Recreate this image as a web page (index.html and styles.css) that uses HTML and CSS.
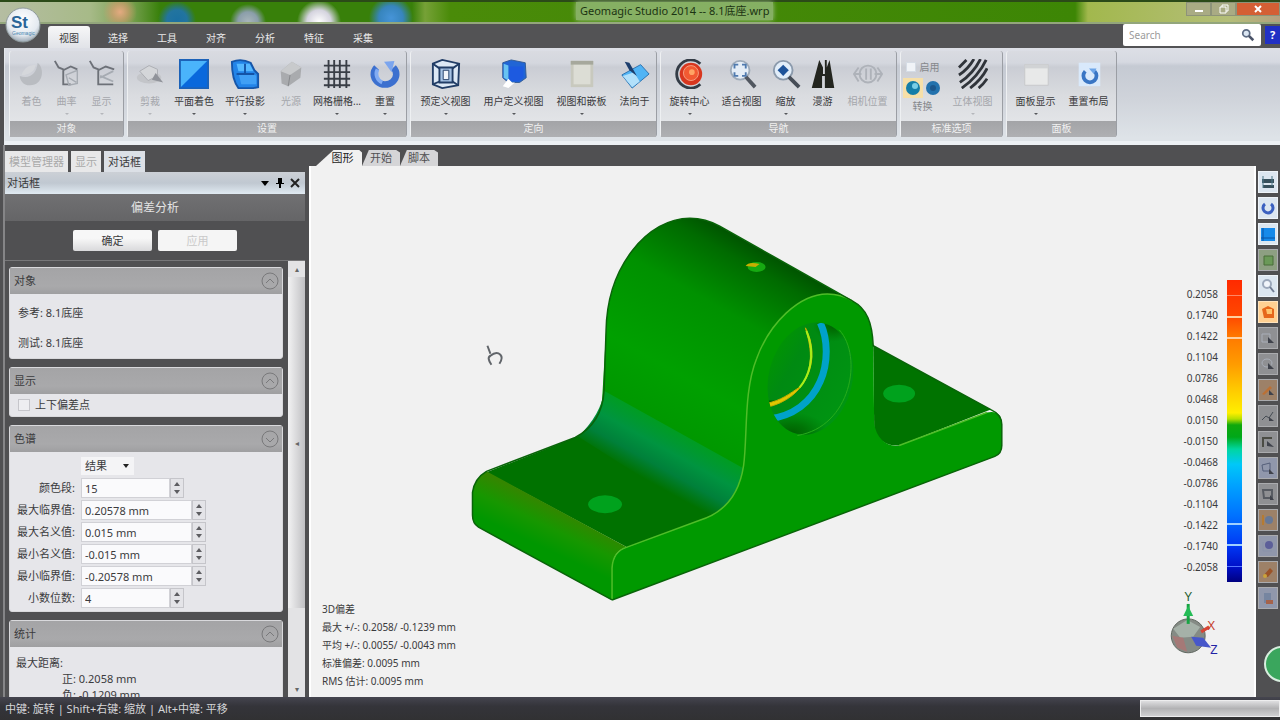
FILE: index.html
```html
<!DOCTYPE html>
<html lang="zh-CN">
<head>
  <meta charset="UTF-8">
  <meta name="viewport" content="width=device-width, initial-scale=1.0">
  <title>Geomagic Studio 2014</title>
  <link rel="stylesheet" href="styles.css">
</head>
<body>
  <header class="titlebar">
    <h1>Geomagic Studio 2014 -- 8.1底座.wrp</h1>
    <div class="window-buttons">
      <button aria-label="最小化"><svg viewBox="0 0 12 12"><rect x="2" y="7" width="8" height="2"/></svg></button>
      <button aria-label="最大化"><svg viewBox="0 0 12 12"><path d="M2 4h6v6H2zM4 4V2h6v6H8" fill="none" stroke="#fff"/></svg></button>
      <button class="close" aria-label="关闭"><svg viewBox="0 0 12 12"><path d="M3 3l6 6M9 3l-6 6" stroke="#fff" stroke-width="2"/></svg></button>
    </div>
  </header>

  <nav class="menubar">
    <button class="app-button" aria-label="Studio">
      <svg viewBox="0 0 36 36">
        <defs>
          <radialGradient id="orb" cx="0.5" cy="0.35" r="0.65">
            <stop offset="0" stop-color="#fff"/>
            <stop offset="0.7" stop-color="#e4eaf0"/>
            <stop offset="1" stop-color="#9ba8b4"/>
          </radialGradient>
        </defs>
        <circle cx="18" cy="18" r="17" fill="url(#orb)" stroke="#8f9a9c"/>
        <text x="6" y="21" class="orb-text">St</text>
        <text x="7" y="28" class="orb-sub">Geomagic</text>
      </svg>
    </button>
    <div class="menu-tabs">
      <button class="active">视图</button>
      <button>选择</button>
      <button>工具</button>
      <button>对齐</button>
      <button>分析</button>
      <button>特征</button>
      <button>采集</button>
    </div>
    <label class="search">
      <input type="text" placeholder="Search" aria-label="Search">
      <svg viewBox="0 0 16 16"><circle cx="6" cy="6" r="4" fill="#dbe6f2" stroke="#5c6b84" stroke-width="2"/><path d="M9 9l5 5" stroke="#4a5368" stroke-width="3"/></svg>
    </label>
    <button class="help">?</button>
  </nav>

  <div class="ribbon">
    <section class="group group-object">
      <div class="tools">
        <button class="tool" disabled>
          <svg viewBox="0 0 32 32"><path d="M22 4c8 6 6 24-8 24C6 28 3 22 3 18c10 4 18-2 19-14z" fill="#b9bcc1"/><path d="M5 17c8 0 14-4 15-11-8 0-13 4-15 11z" fill="#d5d7db"/></svg>
          <span>着色</span>
        </button>
        <button class="tool arrow" disabled>
          <svg viewBox="0 0 32 32" fill="none" stroke="#6d7178" stroke-width="2"><path d="M3 2l4 7 5 2v17M12 12l8-4 7 3M12 27h8"/><path d="M15 17l12-5v14l-9 2zM18 20l8 5" stroke="#a6abb2" stroke-width="1.500"/></svg>
          <span>曲率</span>
        </button>
        <button class="tool arrow" disabled>
          <svg viewBox="0 0 32 32" fill="none" stroke="#6d7178" stroke-width="2"><path d="M3 2l4 7 5 2v17M12 12l8-4 9 3M12 27h16"/><path d="M14 20l14-7M14 18l14 6" stroke="#a6abb2"/></svg>
          <span>显示</span>
        </button>
      </div>
      <h2>对象</h2>
    </section>

    <section class="group group-settings">
      <div class="tools">
        <button class="tool arrow" disabled>
          <svg viewBox="0 0 32 32"><ellipse cx="15" cy="20" rx="13" ry="6" fill="#c3c5c9"/><path d="M5 13l10-6 9 4v7l-10 5z" fill="#d4d6d9" stroke="#abadb2"/><path d="M18 22l12 3-8-10z" fill="#90939a"/></svg>
          <span>剪裁</span>
        </button>
        <button class="tool arrow">
          <svg viewBox="0 0 32 32"><path d="M1 1h30v30H1z" fill="#0968dc"/><path d="M1 1h30L1 31z" fill="#4ab4fb"/><path d="M1 1h30v30H1z" fill="none" stroke="#1c62b8" stroke-width="2"/></svg>
          <span>平面着色</span>
        </button>
        <button class="tool arrow">
          <svg viewBox="0 0 32 32"><path d="M2 3q10-4 20 1l4 8 4 4v14l-5 1H9Q2 22 2 3z" fill="#2384e8" stroke="#1756a8" stroke-width="2"/><path d="M7 5h14l4 8H9z" fill="#55b8ff"/><path d="M9 15h16l3 3v9H12z" fill="#41a0f5"/><path d="M16 5v11M7 16h19" stroke="#1453a6" stroke-width="2"/></svg>
          <span>平行投影</span>
        </button>
        <button class="tool" disabled>
          <svg viewBox="0 0 32 32"><path d="M5 13L17 3l10 6-1 11-13 9-7-3z" fill="#a9abae"/><path d="M5 13l10 4 12-8-10-6z" fill="#c8cacc"/><path d="M15 17l-2 12" stroke="#85878b"/></svg>
          <span>光源</span>
        </button>
        <button class="tool arrow">
          <svg viewBox="0 0 32 32" fill="none" stroke="#393e46" stroke-width="2"><path d="M2 7h28M2 14h28M2 21h28M2 28h28M7 1v30M13 1v30M19 1v30M26 1v30"/></svg>
          <span>网格栅格...</span>
        </button>
        <button class="tool arrow">
          <svg viewBox="0 0 32 32"><path d="M7 9A12 11 0 1 0 25 9" fill="none" stroke="#3c70cf" stroke-width="7"/><path d="M8 11A10 10 0 0 0 13 25" fill="none" stroke="#82acf3" stroke-width="4"/><path d="M15 3l11-1-3 12z" fill="#7ba5ee"/></svg>
          <span>重置</span>
        </button>
      </div>
      <h2>设置</h2>
    </section>

    <section class="group group-orient">
      <div class="tools">
        <button class="tool arrow">
          <svg viewBox="0 0 32 32" fill="#dce8f5" stroke="#213d66" stroke-width="2"><path d="M2 5l10-4 18 4-1 23-17 3L2 27z"/><path d="M2 5l7 5M30 5l-7 5M2 27l7-3M29 28l-6-4" fill="none"/><path d="M9 9h14v16H9z" fill="#a7c3e4"/><path d="M13 12h6v10h-6z" fill="#f2f5fa" stroke-width="1"/></svg>
          <span>预定义视图</span>
        </button>
        <button class="tool arrow">
          <svg viewBox="0 0 32 32"><path d="M4 4l9-3 15 3 1 16-7 5H10l-6-5z" fill="#2165d5" stroke="#315b94"/><path d="M5 5l5 2v16l-5-3z" fill="#68c3f2"/><path d="M11 8h15v12l-6 4-9-1z" fill="#1d5ae0"/><path d="M4 29l6-8 4 4h3l-7 6z" fill="#fff"/></svg>
          <span>用户定义视图</span>
        </button>
        <button class="tool arrow">
          <svg viewBox="0 0 32 32"><path d="M4 2h24v28H4z" fill="#c8c9be"/><path d="M7 5h18v22H7z" fill="#dcddd5"/><path d="M4 2h24v4H4z" fill="#a6a89c"/></svg>
          <span>视图和嵌板</span>
        </button>
        <button class="tool">
          <svg viewBox="0 0 32 32"><path d="M2 17L22 6l9 10-18 15z" fill="#50b4f5" stroke="#286fae"/><path d="M3 18l12-4 6 10-8 6z" fill="#b2e0fa"/><path d="M5 3l5 1 8 14-8-6z" fill="#1c3e6d"/></svg>
          <span>法向于</span>
        </button>
      </div>
      <h2>定向</h2>
    </section>

    <section class="group group-navigate">
      <div class="tools">
        <button class="tool arrow">
          <svg viewBox="0 0 32 32"><path d="M27 5A15 15 0 1 0 27 27" fill="none" stroke="#333c46" stroke-width="3"/><circle cx="17" cy="16" r="12" fill="#d8371f"/><circle cx="17" cy="15" r="8" fill="#f25a32" stroke="#f6a183"/><circle cx="18" cy="14" r="3" fill="#ffa465"/></svg>
          <span>旋转中心</span>
        </button>
        <button class="tool">
          <svg viewBox="0 0 32 32"><circle cx="14" cy="12" r="10" fill="#e4edf6" stroke="#9eabb9" stroke-width="2"/><path d="M20 19l10 11" stroke="#515760" stroke-width="4"/><path d="M8 10V6h4M16 6h4v4M20 14v4h-4M12 18H8v-4" fill="none" stroke="#4f7aae" stroke-width="2"/></svg>
          <span>适合视图</span>
        </button>
        <button class="tool arrow">
          <svg viewBox="0 0 32 32"><circle cx="13" cy="12" r="10" fill="#e1edf9" stroke="#8b9aac" stroke-width="2"/><path d="M19 19l11 11" stroke="#464d57" stroke-width="4"/><path d="M13 6l3 3 3 3-3 3-3 3-3-3-3-3 3-3z" fill="#1d539a"/></svg>
          <span>缩放</span>
        </button>
        <button class="tool">
          <svg viewBox="0 0 32 32"><path d="M12 1l4 8V1h4v8l3-8 5 30H18V18h-3v13H4z" fill="#23251f"/><path d="M16 1h2v15h-2z" fill="#d5d7dd"/></svg>
          <span>漫游</span>
        </button>
        <button class="tool" disabled>
          <svg viewBox="0 0 32 32" fill="none" stroke="#aeb2b9" stroke-width="2"><circle cx="16" cy="16" r="9"/><path d="M1 16h8M23 16h8M6 9l-5 7 5 8M26 9l5 7-5 8M14 10v12M19 10v12"/></svg>
          <span>相机位置</span>
        </button>
      </div>
      <h2>导航</h2>
    </section>

    <section class="group group-stereo">
      <div class="tools">
        <div class="stack">
          <label><input type="checkbox" disabled>启用</label>
          <div class="eyes">
            <svg viewBox="0 0 20 20"><rect width="20" height="20" fill="#f6dfa8"/><circle cx="10" cy="10" r="7" fill="#157ea8"/><circle cx="12" cy="8" r="3" fill="#79cee6"/></svg>
            <svg viewBox="0 0 20 20"><circle cx="10" cy="10" r="7" fill="#2372ad"/><circle cx="10" cy="10" r="3" fill="#1c578c"/></svg>
          </div>
          <span>转换</span>
        </div>
        <button class="tool arrow" disabled>
          <svg viewBox="0 0 32 32" fill="none" stroke="#30343a" stroke-width="3"><path d="M1 9l8-8M1 17C9 12 13 7 17 0M2 25C11 19 19 10 24 0M4 31C15 24 25 12 30 1M13 31C22 24 27 18 31 10M22 31q5-4 9-10"/></svg>
          <span>立体视图</span>
        </button>
      </div>
      <h2>标准选项</h2>
    </section>

    <section class="group group-panel">
      <div class="tools">
        <button class="tool arrow">
          <svg viewBox="0 0 32 32"><path d="M4 6h25v22H4z" fill="#e8e9e9" stroke="#c6c8ca"/><path d="M4 6h25v4H4z" fill="#d1d3d5"/></svg>
          <span>面板显示</span>
        </button>
        <button class="tool">
          <svg viewBox="0 0 32 32"><rect x="5" y="4" width="23" height="25" fill="#d9e9fb"/><path d="M12 13a7 7 0 1 0 10 0" fill="none" stroke="#3975c4" stroke-width="4"/><path d="M16 10h8l-3 6z" fill="#6da5e8"/></svg>
          <span>重置布局</span>
        </button>
      </div>
      <h2>面板</h2>
    </section>
  </div>

  <main class="workspace">
    <aside class="sidebar">
      <div class="side-tabs">
        <button>模型管理器</button>
        <button>显示</button>
        <button class="active">对话框</button>
      </div>
      <div class="dock-title">
        <span>对话框</span>
        <button aria-label="菜单"><svg viewBox="0 0 10 10"><path d="M1 3h8L5 8z"/></svg></button>
        <button aria-label="固定"><svg viewBox="0 0 10 10"><path d="M3 0h4v5h2v1H6v4H4V6H1V5h2z"/></svg></button>
        <button aria-label="关闭"><svg viewBox="0 0 10 10"><path d="M1 1l8 8M9 1L1 9" stroke="#222" stroke-width="2"/></svg></button>
      </div>
      <h2 class="dialog-title">偏差分析</h2>
      <div class="dialog-actions">
        <button>确定</button>
        <button disabled>应用</button>
      </div>

      <div class="dialog-scroll">
        <div class="sections">
          <section class="panel">
            <h3>对象<button aria-label="折叠"><svg viewBox="0 0 18 18"><circle cx="9" cy="9" r="8"/><path d="M5 11l4-4 4 4"/></svg></button></h3>
            <div class="panel-body refs">
              <p>参考: 8.1底座</p>
              <p>测试: 8.1底座</p>
            </div>
          </section>

          <section class="panel">
            <h3>显示<button aria-label="折叠"><svg viewBox="0 0 18 18"><circle cx="9" cy="9" r="8"/><path d="M5 11l4-4 4 4"/></svg></button></h3>
            <div class="panel-body">
              <label class="check"><input type="checkbox">上下偏差点</label>
            </div>
          </section>

          <section class="panel">
            <h3>色谱<button aria-label="展开"><svg viewBox="0 0 18 18"><circle cx="9" cy="9" r="8"/><path d="M5 8l4 4 4-4"/></svg></button></h3>
            <div class="panel-body fields">
              <div class="field">
                <span></span>
                <div class="select"><select aria-label="色谱"><option>结果</option></select></div>
              </div>
              <div class="field short">
                <label for="segments">颜色段:</label>
                <input id="segments" type="text" value="15"><span class="spin"></span>
              </div>
              <div class="field">
                <label for="max-critical">最大临界值:</label>
                <input id="max-critical" type="text" value="0.20578 mm"><span class="spin"></span>
              </div>
              <div class="field">
                <label for="max-nominal">最大名义值:</label>
                <input id="max-nominal" type="text" value="0.015 mm"><span class="spin"></span>
              </div>
              <div class="field">
                <label for="min-nominal">最小名义值:</label>
                <input id="min-nominal" type="text" value="-0.015 mm"><span class="spin"></span>
              </div>
              <div class="field">
                <label for="min-critical">最小临界值:</label>
                <input id="min-critical" type="text" value="-0.20578 mm"><span class="spin"></span>
              </div>
              <div class="field short">
                <label for="decimals">小数位数:</label>
                <input id="decimals" type="text" value="4"><span class="spin"></span>
              </div>
            </div>
          </section>

          <section class="panel">
            <h3>统计<button aria-label="折叠"><svg viewBox="0 0 18 18"><circle cx="9" cy="9" r="8"/><path d="M5 11l4-4 4 4"/></svg></button></h3>
            <div class="panel-body stats">
              <p>最大距离:</p>
              <p class="indent">正: 0.2058 mm</p>
              <p class="indent">负: -0.1209 mm</p>
            </div>
          </section>
        </div>
        <div class="scrollbar">
          <span>▴</span>
          <div class="thumb"><span>◂</span></div>
          <span>▾</span>
        </div>
      </div>
    </aside>

    <div class="view">
      <div class="view-tabs">
        <button class="active">图形</button>
        <button>开始</button>
        <button>脚本</button>
      </div>
      <div class="viewport">
        <svg class="model" viewBox="310 166 946 530">
          <defs>
            <linearGradient id="barrel" gradientUnits="userSpaceOnUse" x1="770" y1="245" x2="660" y2="440">
              <stop offset="0" stop-color="#004c00"/>
              <stop offset="0.120" stop-color="#006b00"/>
              <stop offset="0.350" stop-color="#009100"/>
              <stop offset="0.700" stop-color="#00a000"/>
              <stop offset="1" stop-color="#009500"/>
            </linearGradient>
            <linearGradient id="fillet" gradientUnits="userSpaceOnUse" x1="690" y1="412" x2="651" y2="482">
              <stop offset="0" stop-color="#009a00"/>
              <stop offset="0.300" stop-color="#009c24"/>
              <stop offset="0.550" stop-color="#009440"/>
              <stop offset="0.780" stop-color="#00803a"/>
              <stop offset="1" stop-color="#007200"/>
            </linearGradient>
            <linearGradient id="side" gradientUnits="userSpaceOnUse" x1="562" y1="510" x2="544" y2="548">
              <stop offset="0" stop-color="#348600"/>
              <stop offset="0.500" stop-color="#179700"/>
              <stop offset="1" stop-color="#009700"/>
            </linearGradient>
            <linearGradient id="bore" gradientUnits="userSpaceOnUse" x1="768" y1="350" x2="852" y2="400">
              <stop offset="0" stop-color="#009600"/>
              <stop offset="0.300" stop-color="#008a12"/>
              <stop offset="1" stop-color="#009512"/>
            </linearGradient>
            <radialGradient id="bore-shade">
              <stop offset="0" stop-color="#006200"/>
              <stop offset="0.400" stop-color="#006800" stop-opacity="0.700"/>
              <stop offset="1" stop-color="#007000" stop-opacity="0"/>
            </radialGradient>
            <clipPath id="bore-clip"><ellipse cx="811" cy="378" rx="42" ry="57" transform="rotate(14 811 378)"/></clipPath>
          </defs>
          <!-- base plate, top face -->
          <path d="M486 472L575 437Q590 432 600 414L760 500 710 518 627 547Z" fill="#007200"/>
          <path d="M874 345L992 409 900 445Q880 446 875 428Z" fill="#007300"/>
          <!-- barrel and the fillet under it -->
          <path d="M602 400L606 330C607 265 648 217 690 217Q706 217 720 225L853 300 800 320 755 370 746 490Z" fill="url(#barrel)"/>
          <path d="M604 390Q601 414 578 436L705 517Q738 507 746 469Z" fill="url(#fillet)"/>
          <!-- end of the plate -->
          <path d="M486 471L627 547Q613 550 612 568V600L478 527Q472 523 472 515V492Q474 478 486 471Z" fill="url(#side)"/>
          <!-- front face -->
          <path d="M612 600V568Q613 551 627 547L700 520C726 512 740 492 744 465C748 435 744 390 757 358C770 322 800 293 828 293Q842 293 853 300C868 308 873 322 874 345L875 423C877 438 888 447 900 445L988 412Q1003 409 1003 424V445Q1003 453 996 456Z" fill="#009900"/>
          <path d="M612 600V568Q613 551 627 547L700 520C726 512 740 492 744 465C748 435 744 390 757 358C770 322 800 293 828 293Q842 293 853 300M900 445L988 412" fill="none" stroke="#4fbd28" stroke-width="1.500"/>
          <path d="M612 600L478 527Q472 523 472 515V492Q474 478 486 471L575 437Q602 423 604 390L606 330C607 265 648 217 690 217Q706 217 720 225L853 300C868 308 873 322 874 345L992 409Q1003 414 1003 424V445Q1003 453 996 456L612 600" fill="none" stroke="#096409" stroke-width="1.500"/>
          <!-- bore with the coloured rings -->
          <g clip-path="url(#bore-clip)">
            <path d="M750 310h120v140H750z" fill="url(#bore)"/>
            <ellipse cx="793" cy="432" rx="36" ry="20" fill="url(#bore-shade)"/>
            <ellipse cx="834" cy="325" rx="20" ry="16" fill="url(#bore-shade)"/>
            <path d="M768 400h13l-8 5h-5z" fill="#006200"/>
            <path d="M821 322C836 355 824 414 765 419" fill="none" stroke="#00a2c9" stroke-width="7"/>
            <path d="M806 327C822 357 809 398 766 407L766 403C782 400 790 393 801 386 816 365 811 345 806 327Z" fill="#dfc800" stroke="#c9ad00"/>
            <path d="M807 330C818 356 808 378 800 387" fill="none" stroke="#a7ef19" stroke-width="2"/>
          </g>
          <path d="M840 329C864 356 852 426 798 435" fill="none" stroke="#27ac1b"/>
          <!-- bolt holes and oil hole -->
          <ellipse cx="605" cy="504" rx="17" ry="9" fill="#00a21d"/>
          <ellipse cx="900" cy="393" rx="16" ry="9" fill="#00a21d"/>
          <ellipse cx="757" cy="266" rx="9" ry="5" fill="#16aa12"/>
          <path d="M746 265Q749 260 760 263L756 266Z" fill="#c6ae00"/>
          <!-- hand pointer -->
          <path d="M487 345l3 8M491 364q-5-7-1-9 6-5 10-1 3 3-1 9" fill="none" stroke="#61656a" stroke-width="2"/>
          <!-- axis triad -->
          <g class="triad">
            <circle cx="1190" cy="636" r="17" fill="#858b85" stroke="#606760"/>
            <path d="M1175 629l14-9 13 7-7 10-13 1z" fill="#a5b1a8"/>
            <path d="M1174 636l11 2 4 14-10-4z" fill="#a57977"/>
            <path d="M1190 604v20" stroke="#17a443" stroke-width="3"/>
            <path d="M1190 606l-5 10h10z" fill="#24bc56"/>
            <path d="M1203 632l8-5" stroke="#d84534" stroke-width="3"/>
            <path d="M1193 637l12 1 8 10-15-2z" fill="#4757ca"/>
            <text x="1186" y="601" fill="#245d30">Y</text>
            <text x="1209" y="630" fill="#c63c2b">X</text>
            <text x="1212" y="654" fill="#2222a5">Z</text>
          </g>
        </svg>

        <div class="deviation">
          <p>3D偏差</p>
          <p>最大 +/-: 0.2058/ -0.1239 mm</p>
          <p>平均 +/-: 0.0055/ -0.0043 mm</p>
          <p>标准偏差: 0.0095 mm</p>
          <p>RMS 估计: 0.0095 mm</p>
        </div>

        <div class="legend">
          <ul>
            <li>0.2058</li>
            <li>0.1740</li>
            <li>0.1422</li>
            <li>0.1104</li>
            <li>0.0786</li>
            <li>0.0468</li>
            <li>0.0150</li>
            <li>-0.0150</li>
            <li>-0.0468</li>
            <li>-0.0786</li>
            <li>-0.1104</li>
            <li>-0.1422</li>
            <li>-0.1740</li>
            <li>-0.2058</li>
          </ul>
          <div class="scale"></div>
        </div>
      </div>
    </div>

    <div class="toolstrip">
      <button class="light" aria-label="打印"><svg viewBox="0 0 16 16"><path d="M2 5h12v4H2zM3 11h11v3H3z" fill="#37505c"/><path d="M3 2v12M12 2v10" stroke="#4f798a"/></svg></button>
      <button class="light" aria-label="重置"><svg viewBox="0 0 16 16"><path d="M5 4a5 5 0 1 0 6 0" fill="none" stroke="#3b60c0" stroke-width="3"/></svg></button>
      <button class="light" aria-label="矩形"><svg viewBox="0 0 16 16"><path d="M1 2h14v13H1z" fill="#168aea"/><path d="M3 2v13M1 12h14" stroke="#0852a4"/></svg></button>
      <button class="green" aria-label="模型"><svg viewBox="0 0 16 16"><path d="M4 4h9v9H4z" fill="#6a9958" stroke="#486c39"/></svg></button>
      <button class="light" aria-label="缩放"><svg viewBox="0 0 16 16"><circle cx="7" cy="6" r="4" fill="#f1f5fb" stroke="#9da9bc" stroke-width="2"/><path d="M10 9l4 5" stroke="#707c92" stroke-width="2"/></svg></button>
      <button class="orange" aria-label="选择"><svg viewBox="0 0 16 16"><path d="M2 5l6-3 6 3v9H4z" fill="#e6671b"/><path d="M6 5h6v5H7z" fill="#ffc36b"/></svg></button>
      <button aria-label="矩形选择"><svg viewBox="0 0 16 16"><path d="M2 4h8v8H2z" fill="none" stroke="#a9aeb8"/><path d="M8 7l6 6H8z"/></svg></button>
      <button aria-label="椭圆选择"><svg viewBox="0 0 16 16"><ellipse cx="7" cy="7" rx="5" ry="4" fill="none" stroke="#a9aeb8"/><path d="M8 7l6 6H8z"/></svg></button>
      <button class="brown" aria-label="画笔"><svg viewBox="0 0 16 16"><path d="M2 12l8-8 2 2-8 7z" fill="#bb7034"/><path d="M9 8l5 5H9z"/></svg></button>
      <button aria-label="线条"><svg viewBox="0 0 16 16"><path d="M2 12l4-4 3 2 4-6" fill="none" stroke="#444b53"/><path d="M9 9l5 4H9z"/></svg></button>
      <button aria-label="套索"><svg viewBox="0 0 16 16"><path d="M3 13V4h9" fill="none" stroke="#4b4c44" stroke-width="2"/><path d="M7 7l7 6-7-1z"/></svg></button>
      <button class="blue" aria-label="多边形"><svg viewBox="0 0 16 16"><path d="M2 5l8-2v8H3z" fill="none" stroke="#555f7a"/><path d="M9 9l5 5H9z"/></svg></button>
      <button aria-label="定制区域"><svg viewBox="0 0 16 16"><path d="M3 4h9v8H4z" fill="none" stroke="#575b62" stroke-width="2"/><path d="M10 9l4 5h-4z"/></svg></button>
      <button class="brown" aria-label="贯通"><svg viewBox="0 0 16 16"><circle cx="9" cy="8" r="4" fill="#687895"/><path d="M3 3v10" stroke="#b67b31" stroke-width="2"/></svg></button>
      <button class="blue" aria-label="可见"><svg viewBox="0 0 16 16"><circle cx="9" cy="7" r="4" fill="#5c5f99"/><path d="M3 4v9h9" fill="none" stroke="#8992a9"/></svg></button>
      <button class="brown" aria-label="反转"><svg viewBox="0 0 16 16"><path d="M3 12l7-8 3 3-5 6z" fill="#9b5327"/><circle cx="5" cy="12" r="2" fill="#caa33b"/></svg></button>
      <button class="blue" aria-label="清除"><svg viewBox="0 0 16 16"><path d="M4 3h7v10H4z" fill="#7685a0"/><path d="M6 10h7v4H6z" fill="#a5634b"/></svg></button>
    </div>
  </main>

  <footer class="statusbar">
    <span>中键: 旋转 | Shift+右键: 缩放 | Alt+中键: 平移</span>
    <div class="progress"></div>
  </footer>

  <button class="bubble" aria-label="助手"></button>
</body>
</html>
```

FILE: styles.css
```css
* {
  box-sizing: border-box;
}

body {
  margin: 0;
  height: 100vh;
  display: flex;
  flex-direction: column;
  overflow: hidden;
  position: relative;
  background: #505052;
  color: #3b3b3d;
  font-family: "Noto Sans", "Noto Sans CJK SC", sans-serif;
  font-size: 11px;
  line-height: 16px;
}

h1, h2, h3, p, ul {
  margin: 0;
  padding: 0;
  font-size: inherit;
  font-weight: normal;
}

button, input, select {
  margin: 0;
  padding: 0;
  border: none;
  background: none;
  color: inherit;
  font: inherit;
}

svg {
  display: block;
}

/* title bar, the desktop shows through */
.titlebar {
  height: 24px;
  flex: none;
  display: flex;
  align-items: flex-start;
  border-top: 2px solid #2b4a18;
  border-bottom: 2px solid #93a67c;
  background:
    radial-gradient(circle at 120px 10px, #e4aa80 0, #d79d70aa 8px, transparent 17px),
    radial-gradient(circle at 177px 18px, #1b70a2 0, #22749f 10px, transparent 19px),
    radial-gradient(circle at 248px 20px, #a9b6bb 0, #8b9eaa 10px, transparent 18px),
    radial-gradient(circle at 319px 20px, #fff 0, #d5d4df 12px, transparent 22px),
    radial-gradient(circle at 391px 16px, #4694d8 0, #3785bd 12px, transparent 22px),
    radial-gradient(ellipse at 813px 22px, #e2eada 0, #d2dfc8 8px, transparent 14px),
    linear-gradient(90deg, #b5bda2 0, #a7ba88 90px, #6f9c47 135px, #38800a 160px, #38800a 412px, #76a137 425px, #4a8b09 450px, #3d8605 84%, #a2b84d 85%, #b4be78 96%, #b4a080 100%);
}

.titlebar h1 {
  margin: 0 auto 0 45%;
  padding: 0 4px;
  white-space: nowrap;
  color: #1b3312;
  background: #a7c391aa;
  box-shadow: 0 0 5px #a7c391;
  line-height: 18px;
}

.window-buttons {
  display: flex;
}

.window-buttons button {
  width: 25px;
  height: 14px;
  display: grid;
  place-items: center;
  background: #a9ab84;
  border: 1px solid #8d9379;
}

.window-buttons svg {
  width: 12px;
  fill: #fff;
}

.window-buttons .close {
  width: 44px;
  background: #d45f34;
}

/* menu tabs */
.menubar {
  height: 24px;
  flex: none;
  display: flex;
  align-items: stretch;
  background: #535355;
}

.app-button {
  width: 48px;
  padding-left: 5px;
}

.app-button svg {
  width: 36px;
  height: 36px;
  margin-top: -22px;
}

.orb-text {
  font: bold 17px "Liberation Sans", sans-serif;
  fill: #2a6598;
}

.orb-sub {
  font: 5px "Liberation Sans", sans-serif;
  fill: #4482ae;
}

.menu-tabs {
  flex: 1;
  display: flex;
  gap: 7px;
}

.menu-tabs button {
  width: 42px;
  font-size: 10px;
  padding-top: 3px;
  color: #e9e9e9;
}

.menu-tabs .active {
  margin-top: 2px;
  padding-top: 1px;
  color: #3a3a3c;
  background: linear-gradient(#f7f7f8, #e1e3e8);
  border-radius: 3px 3px 0 0;
}

.search {
  width: 138px;
  height: 22px;
  padding: 0 6px;
  display: flex;
  align-items: center;
  background: #fff;
  border-radius: 2px;
}

.search input {
  flex: 1;
  min-width: 0;
  font-size: 10px;
}

.search input::placeholder {
  color: #9b9b9b;
}

.search svg {
  width: 14px;
}

.help {
  width: 15px;
  height: 18px;
  margin: 2px 0 0 4px;
  background: #2130c4;
  color: #fff;
  font-weight: bold;
}

/* ribbon */
.ribbon {
  height: 97px;
  flex: none;
  display: flex;
  gap: 3px;
  padding: 3px 0 4px 4px;
  margin-left: 4px;
  border-bottom: 4px solid #ecf0f4;
  border-left: 1px solid #e5e8ec;
  background: linear-gradient(#dddfe6 0, #d6d9e1 14px, #c5cad3 18px, #cfd3da 50px, #dee3e8 90px);
}

.group {
  display: flex;
  flex-direction: column;
  border-right: 1px solid #9b9ea4;
  border-left: 1px solid #eef0f2;
  border-radius: 3px;
  background: linear-gradient(#d9dbe1 0, #d4d7de 12px, #cacdd4 16px, #dadce0 45px, #e3e5e8 73px);
}

.group h2 {
  height: 16px;
  flex: none;
  color: #f1f1f1;
  background: linear-gradient(#a3a4a7, #afb0b3);
  font-size: 10px;
  text-align: center;
  line-height: 15px;
}

.tools {
  flex: 1;
  display: grid;
  justify-content: center;
}

.group-object { width: 115px; }
.group-settings { width: 280px; }
.group-orient { width: 247px; }
.group-navigate { width: 237px; }
.group-stereo { width: 103px; }
.group-panel { width: 111px; }

.group-object .tools { grid-template-columns: repeat(3, 35px); }
.group-settings .tools { grid-template-columns: 42px 46px 56px 36px 56px 40px; }
.group-orient .tools { grid-template-columns: 66px 70px 66px 40px; }
.group-navigate .tools { grid-template-columns: 54px 50px 38px 36px 54px; }
.group-stereo .tools { grid-template-columns: 42px 58px; }
.group-panel .tools { grid-template-columns: 54px 52px; }

.tool {
  display: flex;
  flex-direction: column;
  align-items: center;
  justify-content: flex-start;
  padding-top: 8px;
  font-size: 10px;
  line-height: 14px;
  white-space: nowrap;
}

.tool svg {
  width: 30px;
  height: 30px;
  margin-bottom: 5px;
}

.tool:disabled {
  color: #a5a7ac;
}

.tool.arrow::after {
  content: "";
  margin-top: 5px;
  border: 2px solid transparent;
  border-top-color: #55575b;
  border-bottom: 0;
}

.tool.arrow:disabled::after {
  border-top-color: #b5b7bc;
}

.stack {
  display: flex;
  flex-direction: column;
  align-items: center;
  padding-top: 8px;
  color: #85878b;
  font-size: 10px;
  white-space: nowrap;
}

.stack label {
  display: flex;
  align-items: center;
  gap: 4px;
  margin-bottom: 3px;
}

.stack input {
  appearance: none;
  width: 10px;
  height: 10px;
  background: #f0f3f7;
  border: 1px solid #d5dce5;
}

.eyes {
  display: flex;
}

.eyes svg {
  width: 20px;
}

/* main area */
.workspace {
  flex: 1;
  min-height: 0;
  display: flex;
}

.sidebar {
  width: 306px;
  flex: none;
  margin-left: 3px;
  padding: 6px 4px 0 0;
  display: flex;
  flex-direction: column;
  border-left: 2px solid #858587;
}

.side-tabs {
  display: flex;
  gap: 3px;
  height: 21px;
}

.side-tabs button {
  padding: 0 4px;
  background: #e8e8e9;
  color: #aaa;
  white-space: nowrap;
}

.side-tabs .active {
  background: #dce0e6;
  color: #3b3b3d;
}

.dock-title {
  height: 22px;
  display: flex;
  align-items: center;
  gap: 5px;
  padding: 0 5px 0 2px;
  background: linear-gradient(#ccd0d6, #c0c8d1 50%, #e0eaf2);
}

.dock-title span {
  flex: 1;
}

.dock-title svg {
  width: 10px;
  height: 10px;
}

.dialog-title {
  height: 27px;
  color: #e4e4e4;
  background: linear-gradient(#707072, #656567);
  font-size: 12px;
  line-height: 27px;
  text-align: center;
}

.dialog-actions {
  display: flex;
  justify-content: center;
  gap: 6px;
  padding: 9px 0;
}

.dialog-actions button {
  width: 79px;
  height: 21px;
  border-radius: 2px;
  background: linear-gradient(#f7f7f7 40%, #d9d9db);
}

.dialog-actions button:disabled {
  background: #f5f5f5;
  color: #c9c9c9;
}

.dialog-scroll {
  flex: 1;
  min-height: 0;
  display: flex;
  gap: 5px;
  border-top: 1px solid #777779;
}

.sections {
  flex: 1;
  display: flex;
  flex-direction: column;
  gap: 8px;
  padding: 6px 0 0 4px;
  overflow: hidden;
}

.panel {
  flex: none;
  border: 1px solid #d9d9dc;
  border-radius: 3px;
  background: #e6e6ea;
}

.panel h3 {
  height: 26px;
  display: flex;
  align-items: center;
  justify-content: space-between;
  padding: 0 3px 0 4px;
  background: linear-gradient(#a4a4a6, #a9a9ab 70%, #9f9fa1);
}

.panel h3 svg {
  width: 18px;
  fill: none;
  stroke: #79797b;
}

.panel-body {
  padding: 3px 8px;
}

.refs {
  padding: 11px 8px 7px;
}

.refs p {
  line-height: 16px;
  margin-bottom: 14px;
}

.refs p:last-child {
  margin-bottom: 0;
}

.check {
  display: flex;
  align-items: center;
  gap: 5px;
}

.check input {
  appearance: none;
  width: 12px;
  height: 12px;
  border: 1px solid #c6c6cb;
  background: #eeeef1;
}

.fields {
  padding: 3px 6px 2px;
}

.field {
  display: flex;
  height: 22px;
  align-items: center;
}

.field > :first-child {
  width: 59px;
  margin-right: 6px;
  text-align: right;
  white-space: nowrap;
}

.field input {
  width: 111px;
  height: 20px;
  padding-left: 3px;
  background: #fafafc;
  border: 1px solid #d1d1d6;
}

.field.short input {
  width: 89px;
}

.select {
  position: relative;
  background: #f4f4f6;
}

.select select {
  appearance: none;
  width: 53px;
  height: 18px;
  padding-left: 4px;
}

.select::after {
  content: "";
  position: absolute;
  right: 5px;
  top: 7px;
  border: 3px solid transparent;
  border-top: 4px solid #222;
  border-bottom: 0;
  pointer-events: none;
}

.spin {
  width: 14px;
  height: 20px;
  display: flex;
  flex-direction: column;
  align-items: center;
  justify-content: center;
  gap: 4px;
  border: 1px solid #c5c5ca;
  background: #e4e4e8;
}

.spin::before,
.spin::after {
  content: "";
  border: 3px solid transparent;
}

.spin::before {
  border-top: 0;
  border-bottom: 4px solid #5d5d61;
}

.spin::after {
  border-bottom: 0;
  border-top: 4px solid #5d5d61;
}

.stats {
  padding: 8px 6px;
}

.stats .indent {
  padding-left: 46px;
}

.scrollbar {
  width: 17px;
  display: flex;
  flex-direction: column;
  align-items: center;
  background: #e3e3e5;
  color: #666;
  font-size: 8px;
}

.thumb {
  flex: none;
  width: 100%;
  height: 76%;
  display: grid;
  place-items: center;
  background: linear-gradient(90deg, #f2f2f3, #c0c0c3);
}

.scrollbar > :last-child {
  margin-top: auto;
}

.view {
  flex: 1;
  min-width: 0;
  display: flex;
  flex-direction: column;
}

.view-tabs {
  height: 21px;
  display: flex;
  align-items: flex-end;
  padding-left: 7px;
}

.view-tabs button {
  width: 38px;
  height: 16px;
  line-height: 14px;
  color: #505052;
  background: #d5d5d7;
  clip-path: polygon(18% 0, 90% 0, 100% 15%, 100% 100%, 0 100%);
}

.view-tabs .active {
  width: 46px;
  padding-left: 7px;
  color: #222;
  background: #f1f1f1;
  clip-path: polygon(38% 0, 94% 0, 100% 15%, 100% 100%, 0 100%);
}

.viewport {
  flex: 1;
  min-height: 0;
  position: relative;
  background: #f1f1f1;
  border-left: 2px solid #fff;
  border-right: 2px solid #fff;
}

.model {
  width: 100%;
  height: 100%;
}

.triad text {
  font: 12px "Liberation Sans", sans-serif;
}

.deviation {
  position: absolute;
  left: 11px;
  bottom: 7px;
  font-size: 10px;
  line-height: 18px;
}

.legend {
  position: absolute;
  top: 114px;
  right: 12px;
  display: flex;
  gap: 9px;
}

.legend ul {
  list-style: none;
  padding: 4px 0;
  font-size: 10px;
  line-height: 21px;
  text-align: right;
}

.scale {
  width: 15px;
  background:
    linear-gradient(#ffffff66, #ffffff66) 0 15px / 100% 1px no-repeat,
    linear-gradient(#ffd0a0, #ffd0a0) 0 36px / 100% 2px no-repeat,
    linear-gradient(#ffd0a0, #ffd0a0) 0 57px / 100% 2px no-repeat,
    linear-gradient(#9fd0ff, #9fd0ff) 0 243px / 100% 2px no-repeat,
    linear-gradient(#9fd0ff, #9fd0ff) 0 264px / 100% 2px no-repeat,
    linear-gradient(#5577ff, #5577ff) 0 286px / 100% 1px no-repeat,
    linear-gradient(#ff2a00 0, #ff4800 12%, #ff7a00 19%, #ff9c00 28%, #ffc800 36%, #ffef00 44%, #b6df00 46%, #0fa80c 48%, #00a819 52%, #00d6a0 56%, #00c8f8 61%, #00a2ff 68%, #0072ff 78%, #0038f4 88%, #0010c8 95%, #000080 100%);
}

.toolstrip {
  width: 24px;
  flex: none;
  display: flex;
  flex-direction: column;
  align-items: center;
  gap: 4px;
  padding-top: 26px;
}

.toolstrip button {
  width: 20px;
  height: 22px;
  flex: none;
  display: grid;
  place-items: center;
  background: #8f9093;
  border: 1px solid #aaabae;
}

.toolstrip svg {
  width: 16px;
  fill: #3f424b;
}

.toolstrip .light { background: #dce6f0; border-color: #eef3f8; }
.toolstrip .green { background: #8d9f82; }
.toolstrip .orange { background: #ffd092; border-color: #ffe4bd; }
.toolstrip .brown { background: #9d8168; }
.toolstrip .blue { background: #9097ab; }

.statusbar {
  height: 23px;
  flex: none;
  display: flex;
  align-items: center;
  justify-content: space-between;
  padding-left: 5px;
  color: #d5d5d8;
  background: linear-gradient(#45454f 0, #34343a 40%, #313133);
}

.progress {
  width: 140px;
  height: 17px;
  background: linear-gradient(#dedee0, #b2b2b4 50%, #cfcfd1);
  border: 1px solid #ededee;
}

/* floating assistant, half outside of the window */
.bubble {
  position: absolute;
  right: -20px;
  bottom: 38px;
  width: 36px;
  height: 36px;
  border: 2px solid #d8eedf;
  border-radius: 50%;
  background: #3aa65d;
}
```
